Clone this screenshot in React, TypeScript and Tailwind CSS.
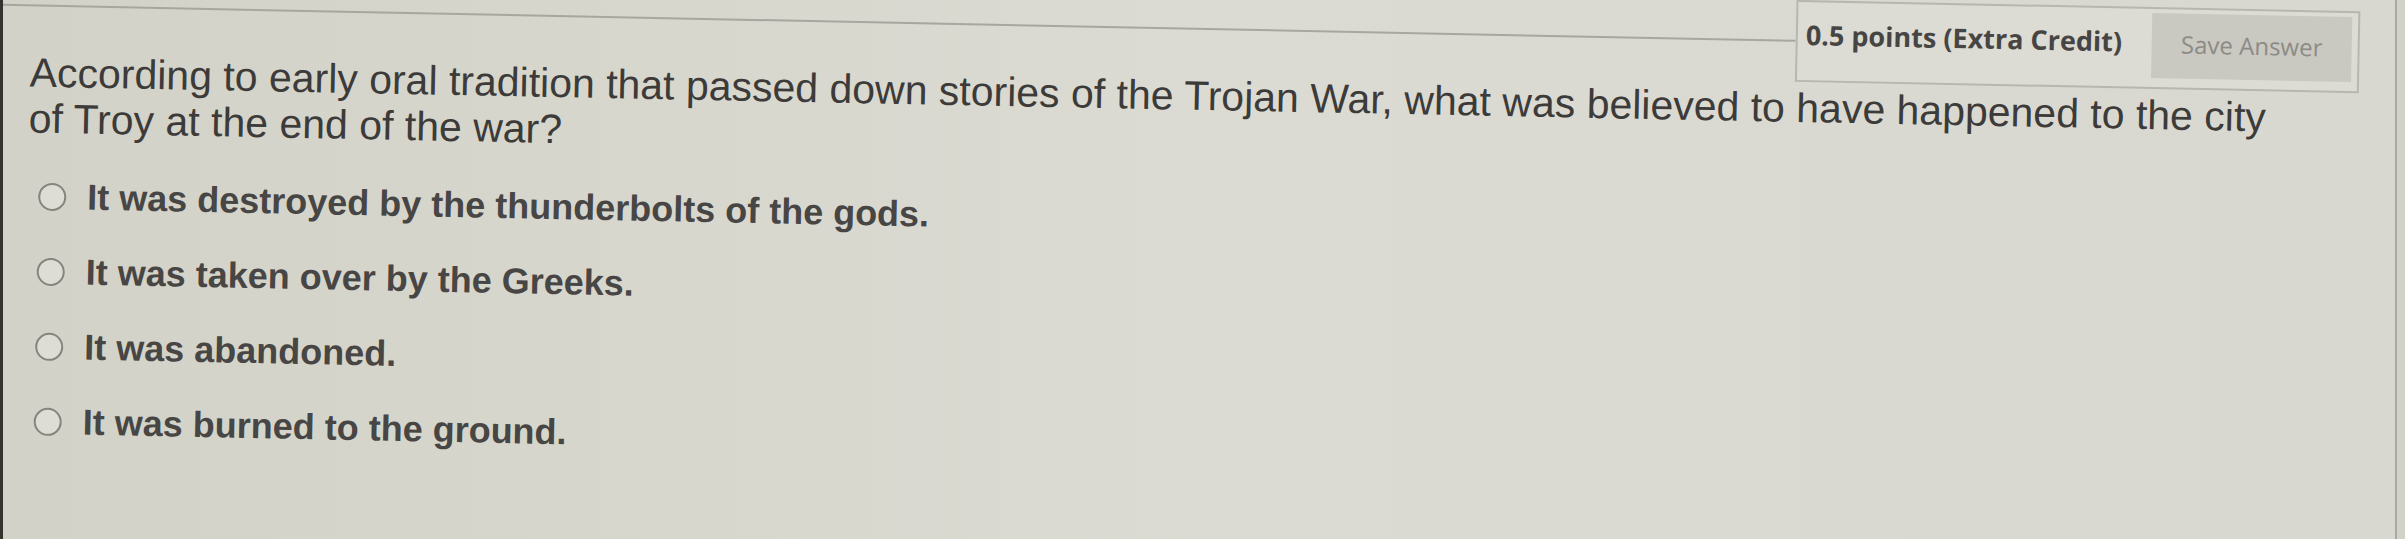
import React from 'react';

const OPTIONS = [
  'It was destroyed by the thunderbolts of the gods.',
  'It was taken over by the Greeks.',
  'It was abandoned.',
  'It was burned to the ground.',
];

export default function App() {
  return (
    <div className="w-[2405px] h-[539px] flex overflow-hidden bg-[#d9d8d0]">
      {/* screen bezel edge */}
      <div className="w-[3px] shrink-0 bg-[#34332f]" />

      <div className="flex-1 overflow-hidden bg-linear-to-r from-[#d3d2c8] via-[#dcdbd3] to-[#d9d8d0] border-r-2 border-[#a9a8a2]">
        {/* photo is taken at a slight tilt */}
        <div className="w-[2445px] h-[539px] -ml-[23px] flex flex-col rotate-[1.15deg]">
          {/* header: rule + points box */}
          <div className="-mt-[12px] flex items-center pr-[70px]">
            <div className="flex-1 h-[2px] bg-[#a7a69f]" />
            <div className="w-[564px] h-[82px] border-2 border-[#b7b6af] bg-[#dcdbd4] flex items-start justify-between pl-[8px] pr-[6px] pt-[4px]">
              <span className="mt-[12px] font-['Open_Sans',sans-serif] font-bold text-[27px] leading-[34px] text-[#464543] whitespace-nowrap">
                0.5 points (Extra Credit)
              </span>
              <button className="w-[200px] h-[65px] bg-[#c9c8c1] flex items-center justify-center pb-[4px] font-['Open_Sans',sans-serif] text-[24px] text-[#8c8b86]">
                Save Answer
              </button>
            </div>
          </div>

          {/* question */}
          <p className="mt-[3px] pl-[46px] w-[2290px] font-['Liberation_Sans',Arial,sans-serif] text-[41px] leading-[46px] text-[#3c3b39]">
            According to early oral tradition that passed down stories of the Trojan War, what was believed to have happened to the city of Troy at the end of the war?
          </p>

          {/* answers */}
          <div className="mt-[17px] pl-[57px] flex flex-col">
            {OPTIONS.map((opt) => (
              <label key={opt} className="h-[75px] flex items-center gap-[21px]">
                <span className="w-[28px] h-[28px] shrink-0 rounded-full border-[2.5px] border-[#85847f] bg-[#dddcd5]" />
                <span className="font-['Liberation_Sans',Arial,sans-serif] font-bold text-[36px] text-[#474644] whitespace-nowrap">
                  {opt}
                </span>
              </label>
            ))}
          </div>
        </div>
      </div>

      <div className="w-[8px] shrink-0 bg-[#d3d2ca]" />
    </div>
  );
}
